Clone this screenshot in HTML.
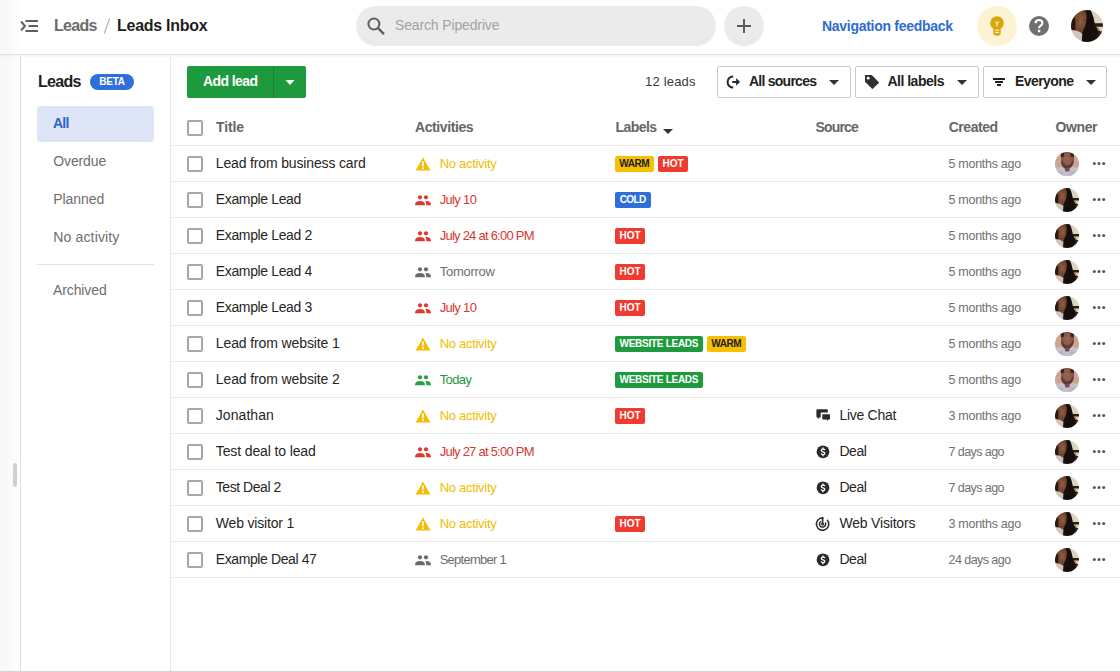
<!DOCTYPE html><html><head><meta charset="utf-8"><title>Leads Inbox</title><style>
*{box-sizing:border-box}
html,body{margin:0;padding:0}
body{width:1120px;height:672px;overflow:hidden;background:#fff;position:relative;font-family:"Liberation Sans",sans-serif}
.t{position:absolute;white-space:nowrap}
.ic{position:absolute;display:block;overflow:visible}
.b{position:absolute}
</style></head><body>
<div class="b" style="left:0;top:0;width:1120px;height:54px;background:#fff"></div>
<div class="b" style="left:0;top:54px;width:1120px;height:1px;background:#e2e2e2"></div>
<div class="b" style="left:0;top:55px;width:1120px;height:2px;background:linear-gradient(#f3f3f3,#fcfcfc)"></div>
<div class="b" style="left:0;top:0;width:20px;height:672px;opacity:1;background:linear-gradient(90deg,#f8f8f8,#fafafa 50%,#fefefe)"></div>
<div class="b" style="left:20px;top:54px;width:1px;height:618px;background:#dedede"></div>
<div class="b" style="left:13px;top:463px;width:4px;height:24px;border-radius:2px;background:#cfcfcf"></div>
<div class="b" style="left:170px;top:54px;width:1px;height:618px;background:#e6e6e6"></div>
<div class="b" style="left:0;top:671px;width:1120px;height:1px;background:#d4d4d4"></div>
<div class="b" style="left:0;top:54px;width:20px;height:1px;background:#e2e2e2"></div>
<div class="b" style="left:0;top:55px;width:20px;height:2px;background:linear-gradient(rgba(0,0,0,0.04),rgba(0,0,0,0.01))"></div>
<svg class="ic" style="left:18px;top:18px" width="22" height="16" viewBox="0 0 22 16"><path d="M3 3.5 L7 8 L3 12.5" fill="none" stroke="#5f5f5f" stroke-width="1.9"/><rect x="7.5" y="2" width="12.5" height="2" fill="#5f5f5f"/><rect x="10.5" y="7" width="9.5" height="2" fill="#5f5f5f"/><rect x="7.5" y="12" width="12.5" height="2" fill="#5f5f5f"/></svg>
<div class="t" style="left:54.00px;top:18.46px;font-size:16px;line-height:16px;color:#6b6b6b;font-weight:700;letter-spacing:-0.688px;">Leads</div>
<svg class="ic" style="left:103px;top:18px" width="10" height="16" viewBox="0 0 10 16"><path d="M6.7 0.4 L1.3 15.5" stroke="#b3b3b3" stroke-width="1.3"/></svg>
<div class="t" style="left:117.00px;top:18.46px;font-size:16px;line-height:16px;color:#1e1e1e;font-weight:700;letter-spacing:-0.265px;">Leads Inbox</div>
<div class="b" style="left:356px;top:6px;width:360px;height:40px;border-radius:20px;background:#ebebeb"></div>
<svg class="ic" style="left:366px;top:16px" width="22" height="22" viewBox="0 0 22 22"><circle cx="7.9" cy="8" r="5.5" fill="none" stroke="#5f5f5f" stroke-width="2"/><path d="M11.8 11.9 L18 18.1" stroke="#5f5f5f" stroke-width="2.3"/></svg>
<div class="t" style="left:395.00px;top:18.35px;font-size:14px;line-height:14px;color:#a3a3a3;font-weight:400;letter-spacing:-0.140px;">Search Pipedrive</div>
<div class="b" style="left:724px;top:6px;width:40px;height:40px;border-radius:20px;background:#ebebeb"></div>
<div class="b" style="left:737px;top:25px;width:14px;height:2px;background:#5a5a5a"></div>
<div class="b" style="left:743px;top:19px;width:2px;height:14px;background:#5a5a5a"></div>
<div class="t" style="left:822.00px;top:18.65px;font-size:14px;line-height:14px;color:#2f6bd0;font-weight:700;letter-spacing:-0.286px;">Navigation feedback</div>
<div class="b" style="left:977px;top:6px;width:40px;height:40px;border-radius:20px;background:#fcf3d2"></div>
<svg class="ic" style="left:989px;top:16px" width="16" height="21" viewBox="0 0 16 21"><circle cx="8" cy="7" r="6.8" fill="#d8a60b"/><path d="M4.2 11 L11.8 11 L11.6 18 Q11 19.8 8 19.8 Q5 19.8 4.4 18 Z" fill="#d8a60b"/><path d="M5.8 14.2 H10.2 M5.8 16.4 H10.2" stroke="#fcf3d2" stroke-width="1"/><path d="M6.2 5.6 L8 7.6 L9.8 5.6 M8 7.6 V10.5" stroke="#f6e9b5" stroke-width="1.3" fill="none"/></svg>
<svg class="ic" style="left:1029px;top:16px" width="20" height="20" viewBox="0 0 20 20"><circle cx="10" cy="10" r="10" fill="#707070"/><path d="M6.6 7.3 Q6.6 4 10 4 Q13.4 4 13.4 7 Q13.4 8.8 11.4 9.9 Q10.1 10.7 10.1 12.2" fill="none" stroke="#fff" stroke-width="2.1"/><rect x="8.9" y="13.8" width="2.4" height="2.4" fill="#fff"/></svg>
<svg class="ic" style="left:1071px;top:10px" width="32" height="32" viewBox="0 0 24 24"><defs><clipPath id="ctop"><circle cx="12" cy="12" r="12"/></clipPath><radialGradient id="gtop" cx="0.5" cy="0.45" r="0.6"><stop offset="0" stop-color="#8f5d42"/><stop offset="1" stop-color="#623c28"/></radialGradient></defs><filter id="bltop" x="-10%" y="-10%" width="120%" height="120%"><feGaussianBlur stdDeviation="0.45"/></filter><g clip-path="url(#ctop)"><g filter="url(#bltop)"><rect x="-2" y="-2" width="28" height="28" fill="#ddd3c2"/><rect x="0" y="0" width="14" height="24" fill="#4a2c1c"/><ellipse cx="7.3" cy="8.8" rx="6" ry="8.2" fill="url(#gtop)"/><path d="M0 3 Q3.2 4.5 3.4 9 L3.2 15.5 L0 16.5 Z" fill="#2a170e"/><path d="M0 15 Q5 14.8 8.8 18 L8.2 24 H0 Z" fill="#cfc7bc"/><path d="M11.5 0 H14.8 Q17 5 17.8 10 Q18.5 13 21.5 15.5 Q21 20 19.7 24 H8 Q8.3 19 9 15.5 Q12.6 10 11.5 0 Z" fill="#140b07"/><path d="M17.5 10 H24 V12.6 H18.5 Z" fill="#2a1c14"/><path d="M19.2 12.8 Q21 12.6 21.4 14.5 L20.8 16 Q19.6 15 19.2 12.8 Z" fill="#b0903a"/><path d="M20.5 16 H24 V24 H19 Z" fill="#2e2018"/><circle cx="5" cy="7.5" r="1" fill="#4a2a1a" opacity="0.35"/><circle cx="9.5" cy="7.5" r="1" fill="#4a2a1a" opacity="0.35"/></g></g></svg>
<div class="t" style="left:38.00px;top:73.96px;font-size:16px;line-height:16px;color:#1e1e1e;font-weight:700;letter-spacing:-0.688px;">Leads</div>
<div class="b" style="left:90px;top:74px;width:44px;height:16px;border-radius:8px;background:#2f6fdb"></div>
<div class="t" style="left:99.30px;top:76.83px;font-size:10px;line-height:10px;color:#ffffff;font-weight:700;letter-spacing:-0.267px;">BETA</div>
<div class="b" style="left:37px;top:106px;width:117px;height:36px;border-radius:4px;background:#dde5f7"></div>
<div class="t" style="left:53.00px;top:115.65px;font-size:14px;line-height:14px;color:#2a63cc;font-weight:700;letter-spacing:-0.750px;">All</div>
<div class="t" style="left:53.30px;top:154.15px;font-size:14px;line-height:14px;color:#6e6e6e;font-weight:400;letter-spacing:-0.133px;">Overdue</div>
<div class="t" style="left:53.30px;top:192.15px;font-size:14px;line-height:14px;color:#6e6e6e;font-weight:400;letter-spacing:-0.067px;">Planned</div>
<div class="t" style="left:53.30px;top:230.15px;font-size:14px;line-height:14px;color:#6e6e6e;font-weight:400;letter-spacing:0.145px;">No activity</div>
<div class="b" style="left:37px;top:264px;width:117px;height:1px;background:#e3e3e3"></div>
<div class="t" style="left:53.00px;top:283.15px;font-size:14px;line-height:14px;color:#6e6e6e;font-weight:400;letter-spacing:-0.107px;">Archived</div>
<div class="b" style="left:187px;top:66px;width:119px;height:32px;border-radius:2px;background:#1d9a3d"></div>
<div class="b" style="left:273px;top:66px;width:1px;height:32px;background:#187f33"></div>
<div class="t" style="left:203.00px;top:74.15px;font-size:14px;line-height:14px;color:#ffffff;font-weight:700;letter-spacing:-0.586px;">Add lead</div>
<svg class="ic" style="left:285px;top:80px" width="10" height="6" viewBox="0 0 10 6"><path d="M0.5 0 H9.5 L5 5 Z" fill="#fff"/></svg>
<div class="t" style="left:645.00px;top:75.00px;font-size:13px;line-height:13px;color:#3a3a3a;font-weight:400;letter-spacing:0.193px;">12 leads</div>
<div class="b" style="left:717px;top:66px;width:134px;height:32px;border-radius:2px;border:1px solid #c9c9c9;background:#fff"></div>
<div class="b" style="left:855px;top:66px;width:124px;height:32px;border-radius:2px;border:1px solid #c9c9c9;background:#fff"></div>
<div class="b" style="left:983px;top:66px;width:124px;height:32px;border-radius:2px;border:1px solid #c9c9c9;background:#fff"></div>
<div class="t" style="left:749.00px;top:74.15px;font-size:14px;line-height:14px;color:#222222;font-weight:700;letter-spacing:-0.750px;">All sources</div>
<svg class="ic" style="left:829px;top:80px" width="10" height="6" viewBox="0 0 10 6"><path d="M0 0 H10 L5 5 Z" fill="#333"/></svg>
<div class="t" style="left:887.40px;top:74.15px;font-size:14px;line-height:14px;color:#222222;font-weight:700;letter-spacing:-0.494px;">All labels</div>
<svg class="ic" style="left:957px;top:80px" width="10" height="6" viewBox="0 0 10 6"><path d="M0 0 H10 L5 5 Z" fill="#333"/></svg>
<div class="t" style="left:1015.00px;top:74.15px;font-size:14px;line-height:14px;color:#222222;font-weight:700;letter-spacing:-0.579px;">Everyone</div>
<svg class="ic" style="left:1086px;top:80px" width="10" height="6" viewBox="0 0 10 6"><path d="M0 0 H10 L5 5 Z" fill="#333"/></svg>
<svg class="ic" style="left:724px;top:74px" width="18" height="16" viewBox="0 0 18 16"><path d="M9.2 2.4 A5.6 5.6 0 1 0 9.2 13.6" fill="none" stroke="#262626" stroke-width="2"/><path d="M8.3 8 H13" stroke="#262626" stroke-width="2"/><path d="M12.2 4 L16 8 L12.2 11.8 Z" fill="#262626"/></svg>
<svg class="ic" style="left:864px;top:74px" width="16" height="16" viewBox="0 0 16 16"><path d="M1 1.5 Q1 1 1.5 1 H7.8 L14.8 8.2 Q15.1 8.6 14.8 9 L8.8 14.8 Q8.4 15.1 8 14.8 L1 7.8 Z" fill="#303030"/><circle cx="4.2" cy="4.2" r="1.4" fill="#fff"/></svg>
<svg class="ic" style="left:992px;top:76px" width="14" height="12" viewBox="0 0 14 12"><rect x="1" y="2" width="12" height="2" fill="#222"/><rect x="3" y="5" width="8" height="2" fill="#222"/><rect x="5" y="8" width="4" height="2" fill="#222"/></svg>
<div class="b" style="left:187px;top:120px;width:16px;height:16px;border:2px solid #a8a8a8;border-radius:2px"></div>
<div class="t" style="left:216.00px;top:120.15px;font-size:14px;line-height:14px;color:#666666;font-weight:700;letter-spacing:-0.138px;">Title</div>
<div class="t" style="left:415.00px;top:120.15px;font-size:14px;line-height:14px;color:#666666;font-weight:700;letter-spacing:-0.406px;">Activities</div>
<div class="t" style="left:615.50px;top:120.15px;font-size:14px;line-height:14px;color:#666666;font-weight:700;letter-spacing:-0.570px;">Labels</div>
<svg class="ic" style="left:663px;top:129px" width="10" height="6" viewBox="0 0 10 6"><path d="M0 0 H10 L5 5 Z" fill="#333"/></svg>
<div class="t" style="left:815.50px;top:120.15px;font-size:14px;line-height:14px;color:#666666;font-weight:700;letter-spacing:-0.850px;">Source</div>
<div class="t" style="left:948.70px;top:120.15px;font-size:14px;line-height:14px;color:#666666;font-weight:700;letter-spacing:-0.442px;">Created</div>
<div class="t" style="left:1055.50px;top:120.15px;font-size:14px;line-height:14px;color:#666666;font-weight:700;letter-spacing:-0.387px;">Owner</div>
<div class="b" style="left:171px;top:145px;width:949px;height:1px;background:#e8e8e8"></div>
<div class="b" style="left:187px;top:156px;width:16px;height:16px;border:2px solid #a8a8a8;border-radius:2px"></div>
<div class="t" style="left:215.80px;top:156.15px;font-size:14px;line-height:14px;color:#262626;font-weight:400;letter-spacing:-0.150px;">Lead from business card</div>
<svg class="ic" style="left:415px;top:157px" width="16" height="14" viewBox="0 0 16 14"><path d="M8 0.6 L15.4 13.6 H0.6 Z" fill="#f6bd00"/><rect x="7.1" y="4.6" width="1.8" height="4.6" fill="#fff"/><rect x="7.1" y="10.2" width="1.8" height="1.8" fill="#fff"/></svg>
<div class="t" style="left:439.70px;top:157.00px;font-size:13px;line-height:13px;color:#f1bc00;font-weight:400;letter-spacing:-0.295px;">No activity</div>
<div class="b" style="left:615px;top:156px;width:39px;height:16px;border-radius:2px;background:#f7c000"></div>
<div class="t" style="left:619.35px;top:158.53px;font-size:10px;line-height:10px;color:#222;font-weight:700;letter-spacing:-0.450px;">WARM</div>
<div class="b" style="left:658px;top:156px;width:30px;height:16px;border-radius:2px;background:#ef3b2f"></div>
<div class="t" style="left:662.40px;top:158.53px;font-size:10px;line-height:10px;color:#fff;font-weight:700;letter-spacing:0.050px;">HOT</div>
<div class="t" style="left:948.50px;top:157.92px;font-size:12.5px;line-height:12.5px;color:#707070;font-weight:400;letter-spacing:-0.286px;">5 months ago</div>
<svg class="ic" style="left:1055px;top:152px" width="24" height="24" viewBox="0 0 24 24"><defs><clipPath id="cr0"><circle cx="12" cy="12" r="12"/></clipPath><filter id="blr0" x="-10%" y="-10%" width="120%" height="120%"><feGaussianBlur stdDeviation="0.55"/></filter><radialGradient id="hr0" cx="0.5" cy="0.45" r="0.55"><stop offset="0" stop-color="#9a6858"/><stop offset="1" stop-color="#7a4c40"/></radialGradient></defs><g clip-path="url(#cr0)"><rect width="24" height="24" fill="#cfa394"/><g filter="url(#blr0)"><path d="M-2 16 Q12 13.8 26 16 V26 H-2 Z" fill="#c6c0cb"/><path d="M6.3 0 Q12 -1 18.8 0 L19 9 Q18.5 15.5 12 17.5 Q5.5 15.5 6.2 9 Z" fill="url(#hr0)"/><path d="M6.3 8 Q12 19 18.7 8 Q18.5 15 12 17.8 Q5.8 15 6.3 8 Z" fill="#5e3a34"/><path d="M5.5 -1 H9 V5 Q7 4 6 6 Z M19 -1 H15.5 V5 Q17.5 4 18.6 6 Z" fill="#3a2423"/><path d="M10 16 H14.5 V19 Q12 20 10 19 Z" fill="#7a5048"/><path d="M3 19 H8 V24 H3 Z M15 19.5 H20 V24 H15 Z" fill="#9fb0d4" opacity="0.55"/></g></g></svg>
<svg class="ic" style="left:1092px;top:161px" width="14" height="5" viewBox="0 0 14 5"><circle cx="2.3" cy="2.5" r="1.5" fill="#555"/><circle cx="7" cy="2.5" r="1.5" fill="#555"/><circle cx="11.7" cy="2.5" r="1.5" fill="#555"/></svg>
<div class="b" style="left:171px;top:181px;width:949px;height:1px;background:#e8e8e8"></div>
<div class="b" style="left:187px;top:192px;width:16px;height:16px;border:2px solid #a8a8a8;border-radius:2px"></div>
<div class="t" style="left:215.80px;top:192.15px;font-size:14px;line-height:14px;color:#262626;font-weight:400;letter-spacing:-0.364px;">Example Lead</div>
<svg class="ic" style="left:415px;top:195px" width="16" height="11" viewBox="0 0 16 11"><circle cx="5" cy="2.3" r="2.1" fill="#dd3a30"/><circle cx="11" cy="2.3" r="2.1" fill="#dd3a30"/><path d="M0 10.2 Q0 6 5 6 Q10 6 10 10.2 Z" fill="#dd3a30"/><path d="M11.2 6 Q16 6 16 10.2 H11.3 Q11.3 7.6 10.3 6.1 Z" fill="#dd3a30"/></svg>
<div class="t" style="left:439.70px;top:193.00px;font-size:13px;line-height:13px;color:#d9382f;font-weight:400;letter-spacing:-0.667px;">July 10</div>
<div class="b" style="left:615px;top:192px;width:36px;height:16px;border-radius:2px;background:#2e6fdc"></div>
<div class="t" style="left:619.65px;top:194.53px;font-size:10px;line-height:10px;color:#fff;font-weight:700;letter-spacing:-0.550px;">COLD</div>
<div class="t" style="left:948.50px;top:193.92px;font-size:12.5px;line-height:12.5px;color:#707070;font-weight:400;letter-spacing:-0.286px;">5 months ago</div>
<svg class="ic" style="left:1055px;top:188px" width="24" height="24" viewBox="0 0 24 24"><defs><clipPath id="cr1"><circle cx="12" cy="12" r="12"/></clipPath><radialGradient id="gr1" cx="0.5" cy="0.45" r="0.6"><stop offset="0" stop-color="#8f5d42"/><stop offset="1" stop-color="#623c28"/></radialGradient></defs><filter id="blr1" x="-10%" y="-10%" width="120%" height="120%"><feGaussianBlur stdDeviation="0.45"/></filter><g clip-path="url(#cr1)"><g filter="url(#blr1)"><rect x="-2" y="-2" width="28" height="28" fill="#ddd3c2"/><rect x="0" y="0" width="14" height="24" fill="#4a2c1c"/><ellipse cx="7.3" cy="8.8" rx="6" ry="8.2" fill="url(#gr1)"/><path d="M0 3 Q3.2 4.5 3.4 9 L3.2 15.5 L0 16.5 Z" fill="#2a170e"/><path d="M0 15 Q5 14.8 8.8 18 L8.2 24 H0 Z" fill="#cfc7bc"/><path d="M11.5 0 H14.8 Q17 5 17.8 10 Q18.5 13 21.5 15.5 Q21 20 19.7 24 H8 Q8.3 19 9 15.5 Q12.6 10 11.5 0 Z" fill="#140b07"/><path d="M17.5 10 H24 V12.6 H18.5 Z" fill="#2a1c14"/><path d="M19.2 12.8 Q21 12.6 21.4 14.5 L20.8 16 Q19.6 15 19.2 12.8 Z" fill="#b0903a"/><path d="M20.5 16 H24 V24 H19 Z" fill="#2e2018"/><circle cx="5" cy="7.5" r="1" fill="#4a2a1a" opacity="0.35"/><circle cx="9.5" cy="7.5" r="1" fill="#4a2a1a" opacity="0.35"/></g></g></svg>
<svg class="ic" style="left:1092px;top:197px" width="14" height="5" viewBox="0 0 14 5"><circle cx="2.3" cy="2.5" r="1.5" fill="#555"/><circle cx="7" cy="2.5" r="1.5" fill="#555"/><circle cx="11.7" cy="2.5" r="1.5" fill="#555"/></svg>
<div class="b" style="left:171px;top:217px;width:949px;height:1px;background:#e8e8e8"></div>
<div class="b" style="left:187px;top:228px;width:16px;height:16px;border:2px solid #a8a8a8;border-radius:2px"></div>
<div class="t" style="left:215.80px;top:228.15px;font-size:14px;line-height:14px;color:#262626;font-weight:400;letter-spacing:-0.362px;">Example Lead 2</div>
<svg class="ic" style="left:415px;top:231px" width="16" height="11" viewBox="0 0 16 11"><circle cx="5" cy="2.3" r="2.1" fill="#dd3a30"/><circle cx="11" cy="2.3" r="2.1" fill="#dd3a30"/><path d="M0 10.2 Q0 6 5 6 Q10 6 10 10.2 Z" fill="#dd3a30"/><path d="M11.2 6 Q16 6 16 10.2 H11.3 Q11.3 7.6 10.3 6.1 Z" fill="#dd3a30"/></svg>
<div class="t" style="left:439.70px;top:229.00px;font-size:13px;line-height:13px;color:#d9382f;font-weight:400;letter-spacing:-0.756px;">July 24 at 6:00 PM</div>
<div class="b" style="left:615px;top:228px;width:30px;height:16px;border-radius:2px;background:#ef3b2f"></div>
<div class="t" style="left:619.40px;top:230.53px;font-size:10px;line-height:10px;color:#fff;font-weight:700;letter-spacing:0.050px;">HOT</div>
<div class="t" style="left:948.50px;top:229.92px;font-size:12.5px;line-height:12.5px;color:#707070;font-weight:400;letter-spacing:-0.286px;">5 months ago</div>
<svg class="ic" style="left:1055px;top:224px" width="24" height="24" viewBox="0 0 24 24"><defs><clipPath id="cr2"><circle cx="12" cy="12" r="12"/></clipPath><radialGradient id="gr2" cx="0.5" cy="0.45" r="0.6"><stop offset="0" stop-color="#8f5d42"/><stop offset="1" stop-color="#623c28"/></radialGradient></defs><filter id="blr2" x="-10%" y="-10%" width="120%" height="120%"><feGaussianBlur stdDeviation="0.45"/></filter><g clip-path="url(#cr2)"><g filter="url(#blr2)"><rect x="-2" y="-2" width="28" height="28" fill="#ddd3c2"/><rect x="0" y="0" width="14" height="24" fill="#4a2c1c"/><ellipse cx="7.3" cy="8.8" rx="6" ry="8.2" fill="url(#gr2)"/><path d="M0 3 Q3.2 4.5 3.4 9 L3.2 15.5 L0 16.5 Z" fill="#2a170e"/><path d="M0 15 Q5 14.8 8.8 18 L8.2 24 H0 Z" fill="#cfc7bc"/><path d="M11.5 0 H14.8 Q17 5 17.8 10 Q18.5 13 21.5 15.5 Q21 20 19.7 24 H8 Q8.3 19 9 15.5 Q12.6 10 11.5 0 Z" fill="#140b07"/><path d="M17.5 10 H24 V12.6 H18.5 Z" fill="#2a1c14"/><path d="M19.2 12.8 Q21 12.6 21.4 14.5 L20.8 16 Q19.6 15 19.2 12.8 Z" fill="#b0903a"/><path d="M20.5 16 H24 V24 H19 Z" fill="#2e2018"/><circle cx="5" cy="7.5" r="1" fill="#4a2a1a" opacity="0.35"/><circle cx="9.5" cy="7.5" r="1" fill="#4a2a1a" opacity="0.35"/></g></g></svg>
<svg class="ic" style="left:1092px;top:233px" width="14" height="5" viewBox="0 0 14 5"><circle cx="2.3" cy="2.5" r="1.5" fill="#555"/><circle cx="7" cy="2.5" r="1.5" fill="#555"/><circle cx="11.7" cy="2.5" r="1.5" fill="#555"/></svg>
<div class="b" style="left:171px;top:253px;width:949px;height:1px;background:#e8e8e8"></div>
<div class="b" style="left:187px;top:264px;width:16px;height:16px;border:2px solid #a8a8a8;border-radius:2px"></div>
<div class="t" style="left:215.80px;top:264.15px;font-size:14px;line-height:14px;color:#262626;font-weight:400;letter-spacing:-0.362px;">Example Lead 4</div>
<svg class="ic" style="left:415px;top:267px" width="16" height="11" viewBox="0 0 16 11"><circle cx="5" cy="2.3" r="2.1" fill="#6a6a6a"/><circle cx="11" cy="2.3" r="2.1" fill="#6a6a6a"/><path d="M0 10.2 Q0 6 5 6 Q10 6 10 10.2 Z" fill="#6a6a6a"/><path d="M11.2 6 Q16 6 16 10.2 H11.3 Q11.3 7.6 10.3 6.1 Z" fill="#6a6a6a"/></svg>
<div class="t" style="left:439.70px;top:265.00px;font-size:13px;line-height:13px;color:#6e6e6e;font-weight:400;letter-spacing:-0.264px;">Tomorrow</div>
<div class="b" style="left:615px;top:264px;width:30px;height:16px;border-radius:2px;background:#ef3b2f"></div>
<div class="t" style="left:619.40px;top:266.54px;font-size:10px;line-height:10px;color:#fff;font-weight:700;letter-spacing:0.050px;">HOT</div>
<div class="t" style="left:948.50px;top:265.92px;font-size:12.5px;line-height:12.5px;color:#707070;font-weight:400;letter-spacing:-0.286px;">5 months ago</div>
<svg class="ic" style="left:1055px;top:260px" width="24" height="24" viewBox="0 0 24 24"><defs><clipPath id="cr3"><circle cx="12" cy="12" r="12"/></clipPath><radialGradient id="gr3" cx="0.5" cy="0.45" r="0.6"><stop offset="0" stop-color="#8f5d42"/><stop offset="1" stop-color="#623c28"/></radialGradient></defs><filter id="blr3" x="-10%" y="-10%" width="120%" height="120%"><feGaussianBlur stdDeviation="0.45"/></filter><g clip-path="url(#cr3)"><g filter="url(#blr3)"><rect x="-2" y="-2" width="28" height="28" fill="#ddd3c2"/><rect x="0" y="0" width="14" height="24" fill="#4a2c1c"/><ellipse cx="7.3" cy="8.8" rx="6" ry="8.2" fill="url(#gr3)"/><path d="M0 3 Q3.2 4.5 3.4 9 L3.2 15.5 L0 16.5 Z" fill="#2a170e"/><path d="M0 15 Q5 14.8 8.8 18 L8.2 24 H0 Z" fill="#cfc7bc"/><path d="M11.5 0 H14.8 Q17 5 17.8 10 Q18.5 13 21.5 15.5 Q21 20 19.7 24 H8 Q8.3 19 9 15.5 Q12.6 10 11.5 0 Z" fill="#140b07"/><path d="M17.5 10 H24 V12.6 H18.5 Z" fill="#2a1c14"/><path d="M19.2 12.8 Q21 12.6 21.4 14.5 L20.8 16 Q19.6 15 19.2 12.8 Z" fill="#b0903a"/><path d="M20.5 16 H24 V24 H19 Z" fill="#2e2018"/><circle cx="5" cy="7.5" r="1" fill="#4a2a1a" opacity="0.35"/><circle cx="9.5" cy="7.5" r="1" fill="#4a2a1a" opacity="0.35"/></g></g></svg>
<svg class="ic" style="left:1092px;top:269px" width="14" height="5" viewBox="0 0 14 5"><circle cx="2.3" cy="2.5" r="1.5" fill="#555"/><circle cx="7" cy="2.5" r="1.5" fill="#555"/><circle cx="11.7" cy="2.5" r="1.5" fill="#555"/></svg>
<div class="b" style="left:171px;top:289px;width:949px;height:1px;background:#e8e8e8"></div>
<div class="b" style="left:187px;top:300px;width:16px;height:16px;border:2px solid #a8a8a8;border-radius:2px"></div>
<div class="t" style="left:215.80px;top:300.15px;font-size:14px;line-height:14px;color:#262626;font-weight:400;letter-spacing:-0.362px;">Example Lead 3</div>
<svg class="ic" style="left:415px;top:303px" width="16" height="11" viewBox="0 0 16 11"><circle cx="5" cy="2.3" r="2.1" fill="#dd3a30"/><circle cx="11" cy="2.3" r="2.1" fill="#dd3a30"/><path d="M0 10.2 Q0 6 5 6 Q10 6 10 10.2 Z" fill="#dd3a30"/><path d="M11.2 6 Q16 6 16 10.2 H11.3 Q11.3 7.6 10.3 6.1 Z" fill="#dd3a30"/></svg>
<div class="t" style="left:439.70px;top:301.00px;font-size:13px;line-height:13px;color:#d9382f;font-weight:400;letter-spacing:-0.667px;">July 10</div>
<div class="b" style="left:615px;top:300px;width:30px;height:16px;border-radius:2px;background:#ef3b2f"></div>
<div class="t" style="left:619.40px;top:302.54px;font-size:10px;line-height:10px;color:#fff;font-weight:700;letter-spacing:0.050px;">HOT</div>
<div class="t" style="left:948.50px;top:301.92px;font-size:12.5px;line-height:12.5px;color:#707070;font-weight:400;letter-spacing:-0.286px;">5 months ago</div>
<svg class="ic" style="left:1055px;top:296px" width="24" height="24" viewBox="0 0 24 24"><defs><clipPath id="cr4"><circle cx="12" cy="12" r="12"/></clipPath><radialGradient id="gr4" cx="0.5" cy="0.45" r="0.6"><stop offset="0" stop-color="#8f5d42"/><stop offset="1" stop-color="#623c28"/></radialGradient></defs><filter id="blr4" x="-10%" y="-10%" width="120%" height="120%"><feGaussianBlur stdDeviation="0.45"/></filter><g clip-path="url(#cr4)"><g filter="url(#blr4)"><rect x="-2" y="-2" width="28" height="28" fill="#ddd3c2"/><rect x="0" y="0" width="14" height="24" fill="#4a2c1c"/><ellipse cx="7.3" cy="8.8" rx="6" ry="8.2" fill="url(#gr4)"/><path d="M0 3 Q3.2 4.5 3.4 9 L3.2 15.5 L0 16.5 Z" fill="#2a170e"/><path d="M0 15 Q5 14.8 8.8 18 L8.2 24 H0 Z" fill="#cfc7bc"/><path d="M11.5 0 H14.8 Q17 5 17.8 10 Q18.5 13 21.5 15.5 Q21 20 19.7 24 H8 Q8.3 19 9 15.5 Q12.6 10 11.5 0 Z" fill="#140b07"/><path d="M17.5 10 H24 V12.6 H18.5 Z" fill="#2a1c14"/><path d="M19.2 12.8 Q21 12.6 21.4 14.5 L20.8 16 Q19.6 15 19.2 12.8 Z" fill="#b0903a"/><path d="M20.5 16 H24 V24 H19 Z" fill="#2e2018"/><circle cx="5" cy="7.5" r="1" fill="#4a2a1a" opacity="0.35"/><circle cx="9.5" cy="7.5" r="1" fill="#4a2a1a" opacity="0.35"/></g></g></svg>
<svg class="ic" style="left:1092px;top:305px" width="14" height="5" viewBox="0 0 14 5"><circle cx="2.3" cy="2.5" r="1.5" fill="#555"/><circle cx="7" cy="2.5" r="1.5" fill="#555"/><circle cx="11.7" cy="2.5" r="1.5" fill="#555"/></svg>
<div class="b" style="left:171px;top:325px;width:949px;height:1px;background:#e8e8e8"></div>
<div class="b" style="left:187px;top:336px;width:16px;height:16px;border:2px solid #a8a8a8;border-radius:2px"></div>
<div class="t" style="left:215.80px;top:336.15px;font-size:14px;line-height:14px;color:#262626;font-weight:400;letter-spacing:-0.114px;">Lead from website 1</div>
<svg class="ic" style="left:415px;top:337px" width="16" height="14" viewBox="0 0 16 14"><path d="M8 0.6 L15.4 13.6 H0.6 Z" fill="#f6bd00"/><rect x="7.1" y="4.6" width="1.8" height="4.6" fill="#fff"/><rect x="7.1" y="10.2" width="1.8" height="1.8" fill="#fff"/></svg>
<div class="t" style="left:439.70px;top:337.00px;font-size:13px;line-height:13px;color:#f1bc00;font-weight:400;letter-spacing:-0.295px;">No activity</div>
<div class="b" style="left:615px;top:336px;width:88px;height:16px;border-radius:2px;background:#1f9b3f"></div>
<div class="t" style="left:619.50px;top:338.54px;font-size:10px;line-height:10px;color:#fff;font-weight:700;letter-spacing:-0.271px;">WEBSITE LEADS</div>
<div class="b" style="left:707px;top:336px;width:39px;height:16px;border-radius:2px;background:#f7c000"></div>
<div class="t" style="left:711.35px;top:338.54px;font-size:10px;line-height:10px;color:#222;font-weight:700;letter-spacing:-0.450px;">WARM</div>
<div class="t" style="left:948.50px;top:337.92px;font-size:12.5px;line-height:12.5px;color:#707070;font-weight:400;letter-spacing:-0.286px;">5 months ago</div>
<svg class="ic" style="left:1055px;top:332px" width="24" height="24" viewBox="0 0 24 24"><defs><clipPath id="cr5"><circle cx="12" cy="12" r="12"/></clipPath><filter id="blr5" x="-10%" y="-10%" width="120%" height="120%"><feGaussianBlur stdDeviation="0.55"/></filter><radialGradient id="hr5" cx="0.5" cy="0.45" r="0.55"><stop offset="0" stop-color="#9a6858"/><stop offset="1" stop-color="#7a4c40"/></radialGradient></defs><g clip-path="url(#cr5)"><rect width="24" height="24" fill="#cfa394"/><g filter="url(#blr5)"><path d="M-2 16 Q12 13.8 26 16 V26 H-2 Z" fill="#c6c0cb"/><path d="M6.3 0 Q12 -1 18.8 0 L19 9 Q18.5 15.5 12 17.5 Q5.5 15.5 6.2 9 Z" fill="url(#hr5)"/><path d="M6.3 8 Q12 19 18.7 8 Q18.5 15 12 17.8 Q5.8 15 6.3 8 Z" fill="#5e3a34"/><path d="M5.5 -1 H9 V5 Q7 4 6 6 Z M19 -1 H15.5 V5 Q17.5 4 18.6 6 Z" fill="#3a2423"/><path d="M10 16 H14.5 V19 Q12 20 10 19 Z" fill="#7a5048"/><path d="M3 19 H8 V24 H3 Z M15 19.5 H20 V24 H15 Z" fill="#9fb0d4" opacity="0.55"/></g></g></svg>
<svg class="ic" style="left:1092px;top:341px" width="14" height="5" viewBox="0 0 14 5"><circle cx="2.3" cy="2.5" r="1.5" fill="#555"/><circle cx="7" cy="2.5" r="1.5" fill="#555"/><circle cx="11.7" cy="2.5" r="1.5" fill="#555"/></svg>
<div class="b" style="left:171px;top:361px;width:949px;height:1px;background:#e8e8e8"></div>
<div class="b" style="left:187px;top:372px;width:16px;height:16px;border:2px solid #a8a8a8;border-radius:2px"></div>
<div class="t" style="left:215.80px;top:372.15px;font-size:14px;line-height:14px;color:#262626;font-weight:400;letter-spacing:-0.114px;">Lead from website 2</div>
<svg class="ic" style="left:415px;top:375px" width="16" height="11" viewBox="0 0 16 11"><circle cx="5" cy="2.3" r="2.1" fill="#28a043"/><circle cx="11" cy="2.3" r="2.1" fill="#28a043"/><path d="M0 10.2 Q0 6 5 6 Q10 6 10 10.2 Z" fill="#28a043"/><path d="M11.2 6 Q16 6 16 10.2 H11.3 Q11.3 7.6 10.3 6.1 Z" fill="#28a043"/></svg>
<div class="t" style="left:439.70px;top:373.00px;font-size:13px;line-height:13px;color:#24963e;font-weight:400;letter-spacing:-0.625px;">Today</div>
<div class="b" style="left:615px;top:372px;width:88px;height:16px;border-radius:2px;background:#1f9b3f"></div>
<div class="t" style="left:619.50px;top:374.54px;font-size:10px;line-height:10px;color:#fff;font-weight:700;letter-spacing:-0.271px;">WEBSITE LEADS</div>
<div class="t" style="left:948.50px;top:373.92px;font-size:12.5px;line-height:12.5px;color:#707070;font-weight:400;letter-spacing:-0.286px;">5 months ago</div>
<svg class="ic" style="left:1055px;top:368px" width="24" height="24" viewBox="0 0 24 24"><defs><clipPath id="cr6"><circle cx="12" cy="12" r="12"/></clipPath><filter id="blr6" x="-10%" y="-10%" width="120%" height="120%"><feGaussianBlur stdDeviation="0.55"/></filter><radialGradient id="hr6" cx="0.5" cy="0.45" r="0.55"><stop offset="0" stop-color="#9a6858"/><stop offset="1" stop-color="#7a4c40"/></radialGradient></defs><g clip-path="url(#cr6)"><rect width="24" height="24" fill="#cfa394"/><g filter="url(#blr6)"><path d="M-2 16 Q12 13.8 26 16 V26 H-2 Z" fill="#c6c0cb"/><path d="M6.3 0 Q12 -1 18.8 0 L19 9 Q18.5 15.5 12 17.5 Q5.5 15.5 6.2 9 Z" fill="url(#hr6)"/><path d="M6.3 8 Q12 19 18.7 8 Q18.5 15 12 17.8 Q5.8 15 6.3 8 Z" fill="#5e3a34"/><path d="M5.5 -1 H9 V5 Q7 4 6 6 Z M19 -1 H15.5 V5 Q17.5 4 18.6 6 Z" fill="#3a2423"/><path d="M10 16 H14.5 V19 Q12 20 10 19 Z" fill="#7a5048"/><path d="M3 19 H8 V24 H3 Z M15 19.5 H20 V24 H15 Z" fill="#9fb0d4" opacity="0.55"/></g></g></svg>
<svg class="ic" style="left:1092px;top:377px" width="14" height="5" viewBox="0 0 14 5"><circle cx="2.3" cy="2.5" r="1.5" fill="#555"/><circle cx="7" cy="2.5" r="1.5" fill="#555"/><circle cx="11.7" cy="2.5" r="1.5" fill="#555"/></svg>
<div class="b" style="left:171px;top:397px;width:949px;height:1px;background:#e8e8e8"></div>
<div class="b" style="left:187px;top:408px;width:16px;height:16px;border:2px solid #a8a8a8;border-radius:2px"></div>
<div class="t" style="left:215.80px;top:408.15px;font-size:14px;line-height:14px;color:#262626;font-weight:400;letter-spacing:0.057px;">Jonathan</div>
<svg class="ic" style="left:415px;top:409px" width="16" height="14" viewBox="0 0 16 14"><path d="M8 0.6 L15.4 13.6 H0.6 Z" fill="#f6bd00"/><rect x="7.1" y="4.6" width="1.8" height="4.6" fill="#fff"/><rect x="7.1" y="10.2" width="1.8" height="1.8" fill="#fff"/></svg>
<div class="t" style="left:439.70px;top:409.00px;font-size:13px;line-height:13px;color:#f1bc00;font-weight:400;letter-spacing:-0.295px;">No activity</div>
<div class="b" style="left:615px;top:408px;width:30px;height:16px;border-radius:2px;background:#ef3b2f"></div>
<div class="t" style="left:619.40px;top:410.54px;font-size:10px;line-height:10px;color:#fff;font-weight:700;letter-spacing:0.050px;">HOT</div>
<svg class="ic" style="left:816px;top:409px" width="16" height="14" viewBox="0 0 16 14"><path d="M0.4 1 Q0.4 0.2 1.2 0.2 H11 Q11.8 0.2 11.8 1 V3.4 H4.7 V8.4 H3.2 L2.4 10 L1.6 8.4 H1.2 Q0.4 8.4 0.4 7.6 Z" fill="#2b2b2b"/><path d="M6.3 5.2 H13.4 Q14 5.2 14 5.8 V9.8 Q14 10.4 13.4 10.4 H12.3 L11.5 12 L10.7 10.4 H6.9 Q6.3 10.4 6.3 9.8 Z" fill="#2b2b2b"/></svg>
<div class="t" style="left:839.40px;top:408.15px;font-size:14px;line-height:14px;color:#262626;font-weight:400;letter-spacing:-0.269px;">Live Chat</div>
<div class="t" style="left:948.50px;top:409.92px;font-size:12.5px;line-height:12.5px;color:#707070;font-weight:400;letter-spacing:-0.286px;">3 months ago</div>
<svg class="ic" style="left:1055px;top:404px" width="24" height="24" viewBox="0 0 24 24"><defs><clipPath id="cr7"><circle cx="12" cy="12" r="12"/></clipPath><radialGradient id="gr7" cx="0.5" cy="0.45" r="0.6"><stop offset="0" stop-color="#8f5d42"/><stop offset="1" stop-color="#623c28"/></radialGradient></defs><filter id="blr7" x="-10%" y="-10%" width="120%" height="120%"><feGaussianBlur stdDeviation="0.45"/></filter><g clip-path="url(#cr7)"><g filter="url(#blr7)"><rect x="-2" y="-2" width="28" height="28" fill="#ddd3c2"/><rect x="0" y="0" width="14" height="24" fill="#4a2c1c"/><ellipse cx="7.3" cy="8.8" rx="6" ry="8.2" fill="url(#gr7)"/><path d="M0 3 Q3.2 4.5 3.4 9 L3.2 15.5 L0 16.5 Z" fill="#2a170e"/><path d="M0 15 Q5 14.8 8.8 18 L8.2 24 H0 Z" fill="#cfc7bc"/><path d="M11.5 0 H14.8 Q17 5 17.8 10 Q18.5 13 21.5 15.5 Q21 20 19.7 24 H8 Q8.3 19 9 15.5 Q12.6 10 11.5 0 Z" fill="#140b07"/><path d="M17.5 10 H24 V12.6 H18.5 Z" fill="#2a1c14"/><path d="M19.2 12.8 Q21 12.6 21.4 14.5 L20.8 16 Q19.6 15 19.2 12.8 Z" fill="#b0903a"/><path d="M20.5 16 H24 V24 H19 Z" fill="#2e2018"/><circle cx="5" cy="7.5" r="1" fill="#4a2a1a" opacity="0.35"/><circle cx="9.5" cy="7.5" r="1" fill="#4a2a1a" opacity="0.35"/></g></g></svg>
<svg class="ic" style="left:1092px;top:413px" width="14" height="5" viewBox="0 0 14 5"><circle cx="2.3" cy="2.5" r="1.5" fill="#555"/><circle cx="7" cy="2.5" r="1.5" fill="#555"/><circle cx="11.7" cy="2.5" r="1.5" fill="#555"/></svg>
<div class="b" style="left:171px;top:433px;width:949px;height:1px;background:#e8e8e8"></div>
<div class="b" style="left:187px;top:444px;width:16px;height:16px;border:2px solid #a8a8a8;border-radius:2px"></div>
<div class="t" style="left:215.80px;top:444.15px;font-size:14px;line-height:14px;color:#262626;font-weight:400;letter-spacing:-0.122px;">Test deal to lead</div>
<svg class="ic" style="left:415px;top:447px" width="16" height="11" viewBox="0 0 16 11"><circle cx="5" cy="2.3" r="2.1" fill="#dd3a30"/><circle cx="11" cy="2.3" r="2.1" fill="#dd3a30"/><path d="M0 10.2 Q0 6 5 6 Q10 6 10 10.2 Z" fill="#dd3a30"/><path d="M11.2 6 Q16 6 16 10.2 H11.3 Q11.3 7.6 10.3 6.1 Z" fill="#dd3a30"/></svg>
<div class="t" style="left:439.70px;top:445.00px;font-size:13px;line-height:13px;color:#d9382f;font-weight:400;letter-spacing:-0.756px;">July 27 at 5:00 PM</div>
<svg class="ic" style="left:816px;top:445px" width="14" height="14" viewBox="0 0 14 14"><circle cx="7" cy="6.8" r="6.4" fill="#2b2b2b"/><path d="M8.9 5.1 Q8.5 4.2 7 4.2 Q5.3 4.2 5.3 5.4 Q5.3 6.4 7 6.8 Q8.8 7.2 8.8 8.4 Q8.8 9.6 7 9.6 Q5.5 9.6 5.1 8.6" fill="none" stroke="#fff" stroke-width="1.25"/><path d="M7 2.6 V4.3 M7 9.5 V11.2" stroke="#fff" stroke-width="1.25"/></svg>
<div class="t" style="left:839.40px;top:444.15px;font-size:14px;line-height:14px;color:#262626;font-weight:400;letter-spacing:-0.433px;">Deal</div>
<div class="t" style="left:948.50px;top:445.92px;font-size:12.5px;line-height:12.5px;color:#707070;font-weight:400;letter-spacing:-0.572px;">7 days ago</div>
<svg class="ic" style="left:1055px;top:440px" width="24" height="24" viewBox="0 0 24 24"><defs><clipPath id="cr8"><circle cx="12" cy="12" r="12"/></clipPath><radialGradient id="gr8" cx="0.5" cy="0.45" r="0.6"><stop offset="0" stop-color="#8f5d42"/><stop offset="1" stop-color="#623c28"/></radialGradient></defs><filter id="blr8" x="-10%" y="-10%" width="120%" height="120%"><feGaussianBlur stdDeviation="0.45"/></filter><g clip-path="url(#cr8)"><g filter="url(#blr8)"><rect x="-2" y="-2" width="28" height="28" fill="#ddd3c2"/><rect x="0" y="0" width="14" height="24" fill="#4a2c1c"/><ellipse cx="7.3" cy="8.8" rx="6" ry="8.2" fill="url(#gr8)"/><path d="M0 3 Q3.2 4.5 3.4 9 L3.2 15.5 L0 16.5 Z" fill="#2a170e"/><path d="M0 15 Q5 14.8 8.8 18 L8.2 24 H0 Z" fill="#cfc7bc"/><path d="M11.5 0 H14.8 Q17 5 17.8 10 Q18.5 13 21.5 15.5 Q21 20 19.7 24 H8 Q8.3 19 9 15.5 Q12.6 10 11.5 0 Z" fill="#140b07"/><path d="M17.5 10 H24 V12.6 H18.5 Z" fill="#2a1c14"/><path d="M19.2 12.8 Q21 12.6 21.4 14.5 L20.8 16 Q19.6 15 19.2 12.8 Z" fill="#b0903a"/><path d="M20.5 16 H24 V24 H19 Z" fill="#2e2018"/><circle cx="5" cy="7.5" r="1" fill="#4a2a1a" opacity="0.35"/><circle cx="9.5" cy="7.5" r="1" fill="#4a2a1a" opacity="0.35"/></g></g></svg>
<svg class="ic" style="left:1092px;top:449px" width="14" height="5" viewBox="0 0 14 5"><circle cx="2.3" cy="2.5" r="1.5" fill="#555"/><circle cx="7" cy="2.5" r="1.5" fill="#555"/><circle cx="11.7" cy="2.5" r="1.5" fill="#555"/></svg>
<div class="b" style="left:171px;top:469px;width:949px;height:1px;background:#e8e8e8"></div>
<div class="b" style="left:187px;top:480px;width:16px;height:16px;border:2px solid #a8a8a8;border-radius:2px"></div>
<div class="t" style="left:215.80px;top:480.15px;font-size:14px;line-height:14px;color:#262626;font-weight:400;letter-spacing:-0.455px;">Test Deal 2</div>
<svg class="ic" style="left:415px;top:481px" width="16" height="14" viewBox="0 0 16 14"><path d="M8 0.6 L15.4 13.6 H0.6 Z" fill="#f6bd00"/><rect x="7.1" y="4.6" width="1.8" height="4.6" fill="#fff"/><rect x="7.1" y="10.2" width="1.8" height="1.8" fill="#fff"/></svg>
<div class="t" style="left:439.70px;top:481.00px;font-size:13px;line-height:13px;color:#f1bc00;font-weight:400;letter-spacing:-0.295px;">No activity</div>
<svg class="ic" style="left:816px;top:481px" width="14" height="14" viewBox="0 0 14 14"><circle cx="7" cy="6.8" r="6.4" fill="#2b2b2b"/><path d="M8.9 5.1 Q8.5 4.2 7 4.2 Q5.3 4.2 5.3 5.4 Q5.3 6.4 7 6.8 Q8.8 7.2 8.8 8.4 Q8.8 9.6 7 9.6 Q5.5 9.6 5.1 8.6" fill="none" stroke="#fff" stroke-width="1.25"/><path d="M7 2.6 V4.3 M7 9.5 V11.2" stroke="#fff" stroke-width="1.25"/></svg>
<div class="t" style="left:839.40px;top:480.15px;font-size:14px;line-height:14px;color:#262626;font-weight:400;letter-spacing:-0.433px;">Deal</div>
<div class="t" style="left:948.50px;top:481.92px;font-size:12.5px;line-height:12.5px;color:#707070;font-weight:400;letter-spacing:-0.572px;">7 days ago</div>
<svg class="ic" style="left:1055px;top:476px" width="24" height="24" viewBox="0 0 24 24"><defs><clipPath id="cr9"><circle cx="12" cy="12" r="12"/></clipPath><radialGradient id="gr9" cx="0.5" cy="0.45" r="0.6"><stop offset="0" stop-color="#8f5d42"/><stop offset="1" stop-color="#623c28"/></radialGradient></defs><filter id="blr9" x="-10%" y="-10%" width="120%" height="120%"><feGaussianBlur stdDeviation="0.45"/></filter><g clip-path="url(#cr9)"><g filter="url(#blr9)"><rect x="-2" y="-2" width="28" height="28" fill="#ddd3c2"/><rect x="0" y="0" width="14" height="24" fill="#4a2c1c"/><ellipse cx="7.3" cy="8.8" rx="6" ry="8.2" fill="url(#gr9)"/><path d="M0 3 Q3.2 4.5 3.4 9 L3.2 15.5 L0 16.5 Z" fill="#2a170e"/><path d="M0 15 Q5 14.8 8.8 18 L8.2 24 H0 Z" fill="#cfc7bc"/><path d="M11.5 0 H14.8 Q17 5 17.8 10 Q18.5 13 21.5 15.5 Q21 20 19.7 24 H8 Q8.3 19 9 15.5 Q12.6 10 11.5 0 Z" fill="#140b07"/><path d="M17.5 10 H24 V12.6 H18.5 Z" fill="#2a1c14"/><path d="M19.2 12.8 Q21 12.6 21.4 14.5 L20.8 16 Q19.6 15 19.2 12.8 Z" fill="#b0903a"/><path d="M20.5 16 H24 V24 H19 Z" fill="#2e2018"/><circle cx="5" cy="7.5" r="1" fill="#4a2a1a" opacity="0.35"/><circle cx="9.5" cy="7.5" r="1" fill="#4a2a1a" opacity="0.35"/></g></g></svg>
<svg class="ic" style="left:1092px;top:485px" width="14" height="5" viewBox="0 0 14 5"><circle cx="2.3" cy="2.5" r="1.5" fill="#555"/><circle cx="7" cy="2.5" r="1.5" fill="#555"/><circle cx="11.7" cy="2.5" r="1.5" fill="#555"/></svg>
<div class="b" style="left:171px;top:505px;width:949px;height:1px;background:#e8e8e8"></div>
<div class="b" style="left:187px;top:516px;width:16px;height:16px;border:2px solid #a8a8a8;border-radius:2px"></div>
<div class="t" style="left:215.80px;top:516.15px;font-size:14px;line-height:14px;color:#262626;font-weight:400;letter-spacing:-0.179px;">Web visitor 1</div>
<svg class="ic" style="left:415px;top:517px" width="16" height="14" viewBox="0 0 16 14"><path d="M8 0.6 L15.4 13.6 H0.6 Z" fill="#f6bd00"/><rect x="7.1" y="4.6" width="1.8" height="4.6" fill="#fff"/><rect x="7.1" y="10.2" width="1.8" height="1.8" fill="#fff"/></svg>
<div class="t" style="left:439.70px;top:517.00px;font-size:13px;line-height:13px;color:#f1bc00;font-weight:400;letter-spacing:-0.295px;">No activity</div>
<div class="b" style="left:615px;top:516px;width:30px;height:16px;border-radius:2px;background:#ef3b2f"></div>
<div class="t" style="left:619.40px;top:518.53px;font-size:10px;line-height:10px;color:#fff;font-weight:700;letter-spacing:0.050px;">HOT</div>
<svg class="ic" style="left:815px;top:516px" width="16" height="16" viewBox="0 0 16 16"><path d="M7.6 1.8 A6.2 6.2 0 1 0 12.1 3.7" fill="none" stroke="#2b2b2b" stroke-width="1.5"/><path d="M6.05 5.32 A3.1 3.1 0 1 0 10.28 6.45" fill="none" stroke="#2b2b2b" stroke-width="1.5"/><path d="M6.6 1.0 H8.6 L8.3 8 H6.9 Z" fill="#2b2b2b"/><circle cx="7.6" cy="8" r="1.5" fill="#2b2b2b"/></svg>
<div class="t" style="left:839.40px;top:516.15px;font-size:14px;line-height:14px;color:#262626;font-weight:400;letter-spacing:-0.186px;">Web Visitors</div>
<div class="t" style="left:948.50px;top:517.92px;font-size:12.5px;line-height:12.5px;color:#707070;font-weight:400;letter-spacing:-0.286px;">3 months ago</div>
<svg class="ic" style="left:1055px;top:512px" width="24" height="24" viewBox="0 0 24 24"><defs><clipPath id="cr10"><circle cx="12" cy="12" r="12"/></clipPath><radialGradient id="gr10" cx="0.5" cy="0.45" r="0.6"><stop offset="0" stop-color="#8f5d42"/><stop offset="1" stop-color="#623c28"/></radialGradient></defs><filter id="blr10" x="-10%" y="-10%" width="120%" height="120%"><feGaussianBlur stdDeviation="0.45"/></filter><g clip-path="url(#cr10)"><g filter="url(#blr10)"><rect x="-2" y="-2" width="28" height="28" fill="#ddd3c2"/><rect x="0" y="0" width="14" height="24" fill="#4a2c1c"/><ellipse cx="7.3" cy="8.8" rx="6" ry="8.2" fill="url(#gr10)"/><path d="M0 3 Q3.2 4.5 3.4 9 L3.2 15.5 L0 16.5 Z" fill="#2a170e"/><path d="M0 15 Q5 14.8 8.8 18 L8.2 24 H0 Z" fill="#cfc7bc"/><path d="M11.5 0 H14.8 Q17 5 17.8 10 Q18.5 13 21.5 15.5 Q21 20 19.7 24 H8 Q8.3 19 9 15.5 Q12.6 10 11.5 0 Z" fill="#140b07"/><path d="M17.5 10 H24 V12.6 H18.5 Z" fill="#2a1c14"/><path d="M19.2 12.8 Q21 12.6 21.4 14.5 L20.8 16 Q19.6 15 19.2 12.8 Z" fill="#b0903a"/><path d="M20.5 16 H24 V24 H19 Z" fill="#2e2018"/><circle cx="5" cy="7.5" r="1" fill="#4a2a1a" opacity="0.35"/><circle cx="9.5" cy="7.5" r="1" fill="#4a2a1a" opacity="0.35"/></g></g></svg>
<svg class="ic" style="left:1092px;top:521px" width="14" height="5" viewBox="0 0 14 5"><circle cx="2.3" cy="2.5" r="1.5" fill="#555"/><circle cx="7" cy="2.5" r="1.5" fill="#555"/><circle cx="11.7" cy="2.5" r="1.5" fill="#555"/></svg>
<div class="b" style="left:171px;top:541px;width:949px;height:1px;background:#e8e8e8"></div>
<div class="b" style="left:187px;top:552px;width:16px;height:16px;border:2px solid #a8a8a8;border-radius:2px"></div>
<div class="t" style="left:215.80px;top:552.15px;font-size:14px;line-height:14px;color:#262626;font-weight:400;letter-spacing:-0.400px;">Example Deal 47</div>
<svg class="ic" style="left:415px;top:555px" width="16" height="11" viewBox="0 0 16 11"><circle cx="5" cy="2.3" r="2.1" fill="#6a6a6a"/><circle cx="11" cy="2.3" r="2.1" fill="#6a6a6a"/><path d="M0 10.2 Q0 6 5 6 Q10 6 10 10.2 Z" fill="#6a6a6a"/><path d="M11.2 6 Q16 6 16 10.2 H11.3 Q11.3 7.6 10.3 6.1 Z" fill="#6a6a6a"/></svg>
<div class="t" style="left:439.70px;top:553.00px;font-size:13px;line-height:13px;color:#6e6e6e;font-weight:400;letter-spacing:-0.745px;">September 1</div>
<svg class="ic" style="left:816px;top:553px" width="14" height="14" viewBox="0 0 14 14"><circle cx="7" cy="6.8" r="6.4" fill="#2b2b2b"/><path d="M8.9 5.1 Q8.5 4.2 7 4.2 Q5.3 4.2 5.3 5.4 Q5.3 6.4 7 6.8 Q8.8 7.2 8.8 8.4 Q8.8 9.6 7 9.6 Q5.5 9.6 5.1 8.6" fill="none" stroke="#fff" stroke-width="1.25"/><path d="M7 2.6 V4.3 M7 9.5 V11.2" stroke="#fff" stroke-width="1.25"/></svg>
<div class="t" style="left:839.40px;top:552.15px;font-size:14px;line-height:14px;color:#262626;font-weight:400;letter-spacing:-0.433px;">Deal</div>
<div class="t" style="left:948.50px;top:553.92px;font-size:12.5px;line-height:12.5px;color:#707070;font-weight:400;letter-spacing:-0.550px;">24 days ago</div>
<svg class="ic" style="left:1055px;top:548px" width="24" height="24" viewBox="0 0 24 24"><defs><clipPath id="cr11"><circle cx="12" cy="12" r="12"/></clipPath><radialGradient id="gr11" cx="0.5" cy="0.45" r="0.6"><stop offset="0" stop-color="#8f5d42"/><stop offset="1" stop-color="#623c28"/></radialGradient></defs><filter id="blr11" x="-10%" y="-10%" width="120%" height="120%"><feGaussianBlur stdDeviation="0.45"/></filter><g clip-path="url(#cr11)"><g filter="url(#blr11)"><rect x="-2" y="-2" width="28" height="28" fill="#ddd3c2"/><rect x="0" y="0" width="14" height="24" fill="#4a2c1c"/><ellipse cx="7.3" cy="8.8" rx="6" ry="8.2" fill="url(#gr11)"/><path d="M0 3 Q3.2 4.5 3.4 9 L3.2 15.5 L0 16.5 Z" fill="#2a170e"/><path d="M0 15 Q5 14.8 8.8 18 L8.2 24 H0 Z" fill="#cfc7bc"/><path d="M11.5 0 H14.8 Q17 5 17.8 10 Q18.5 13 21.5 15.5 Q21 20 19.7 24 H8 Q8.3 19 9 15.5 Q12.6 10 11.5 0 Z" fill="#140b07"/><path d="M17.5 10 H24 V12.6 H18.5 Z" fill="#2a1c14"/><path d="M19.2 12.8 Q21 12.6 21.4 14.5 L20.8 16 Q19.6 15 19.2 12.8 Z" fill="#b0903a"/><path d="M20.5 16 H24 V24 H19 Z" fill="#2e2018"/><circle cx="5" cy="7.5" r="1" fill="#4a2a1a" opacity="0.35"/><circle cx="9.5" cy="7.5" r="1" fill="#4a2a1a" opacity="0.35"/></g></g></svg>
<svg class="ic" style="left:1092px;top:557px" width="14" height="5" viewBox="0 0 14 5"><circle cx="2.3" cy="2.5" r="1.5" fill="#555"/><circle cx="7" cy="2.5" r="1.5" fill="#555"/><circle cx="11.7" cy="2.5" r="1.5" fill="#555"/></svg>
<div class="b" style="left:171px;top:577px;width:949px;height:1px;background:#e8e8e8"></div>
</body></html>
